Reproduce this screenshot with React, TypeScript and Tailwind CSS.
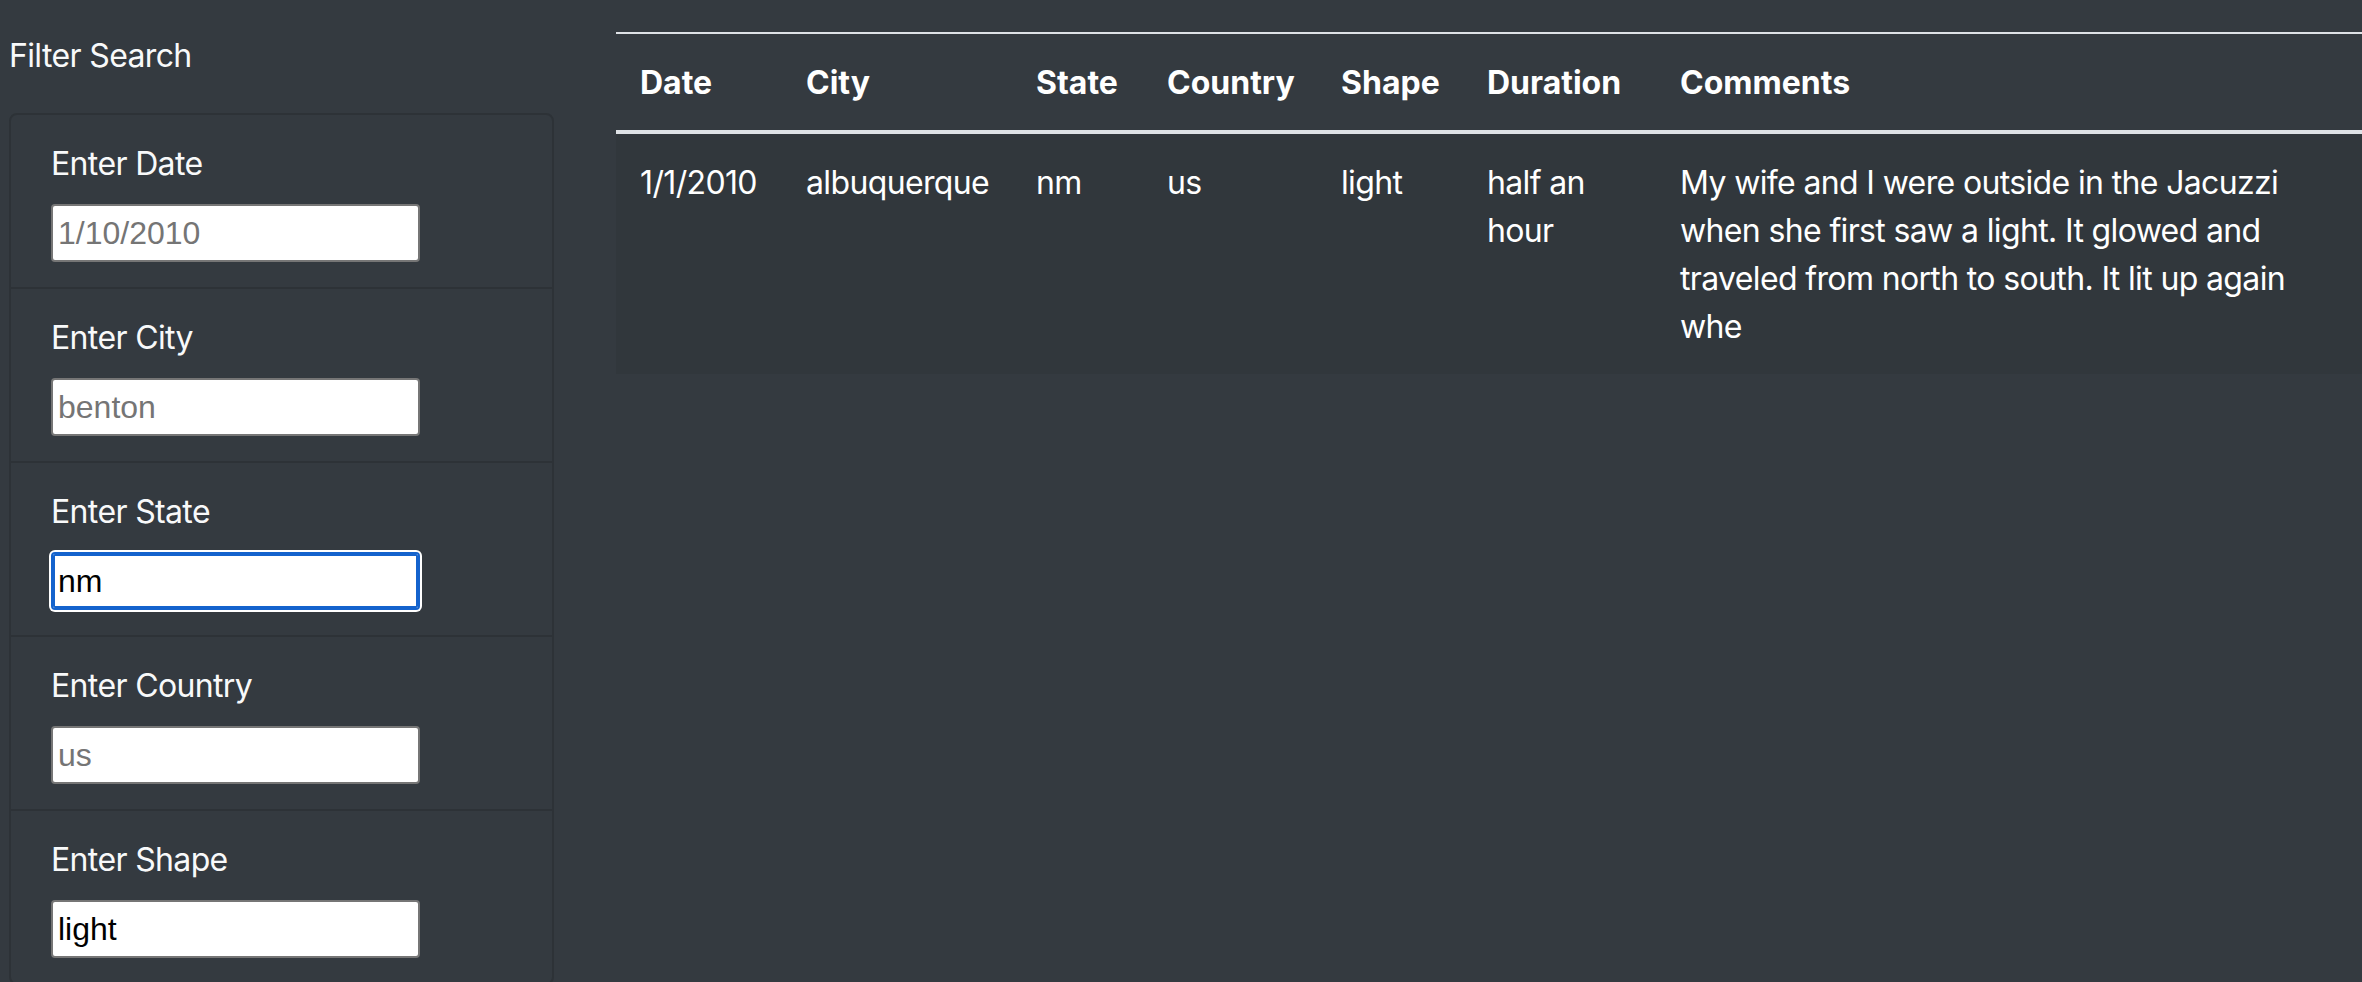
import React from 'react';

type Filter = {
  label: string;
  placeholder?: string;
  value?: string;
  focused?: boolean;
};

const filters: Filter[] = [
  { label: 'Enter Date', placeholder: '1/10/2010' },
  { label: 'Enter City', placeholder: 'benton' },
  { label: 'Enter State', value: 'nm', focused: true },
  { label: 'Enter Country', placeholder: 'us' },
  { label: 'Enter Shape', value: 'light' },
];

const columns = [
  { name: 'Date', width: 'w-[166px]' },
  { name: 'City', width: 'w-[230px]' },
  { name: 'State', width: 'w-[131px]' },
  { name: 'Country', width: 'w-[174px]' },
  { name: 'Shape', width: 'w-[146px]' },
  { name: 'Duration', width: 'w-[193px]' },
  { name: 'Comments', width: '' },
];

const rows = [
  [
    '1/1/2010',
    'albuquerque',
    'nm',
    'us',
    'light',
    'half an hour',
    'My wife and I were outside in the Jacuzzi when she first saw a light. It glowed and traveled from north to south. It lit up again whe',
  ],
];

export default function App() {
  return (
    <div className="h-screen w-full overflow-hidden bg-[#343a40] text-[32px] leading-[48px] text-[#f8f9fa] font-[Inter,sans-serif]">
      <div className="flex pt-[32px]">
        {/* Sidebar */}
        <aside className="ml-[9px] w-[545px] shrink-0">
          <div className="mb-[33px] tracking-[-0.02em]">Filter Search</div>
          <ul className="rounded-[8px] border-2 border-[#2d3237]">
            {filters.map((f, i) => (
              <li
                key={f.label}
                className={`flex flex-col items-start px-[40px] py-[25px] ${i < filters.length - 1 ? 'border-b-2 border-[#2d3237]' : ''}`}
              >
                <label className="mb-[16px] tracking-[-0.02em]">{f.label}</label>
                <input
                  type="text"
                  readOnly
                  placeholder={f.placeholder}
                  defaultValue={f.value}
                  className={`h-[58px] w-[369px] rounded-[4px] border-2 bg-white px-[5px] text-[32px] leading-normal text-black placeholder:text-[#757575] outline-none font-['Liberation_Sans',Arial,sans-serif] ${
                    f.focused
                      ? 'border-[#1463cd] shadow-[0_0_0_2px_#ffffff,inset_0_0_0_2px_#1463cd]'
                      : 'border-[#767676]'
                  }`}
                />
              </li>
            ))}
          </ul>
        </aside>

        {/* Results table */}
        <main className="ml-[62px] flex-1">
          <table className="w-full table-fixed border-collapse">
            <thead>
              <tr>
                {columns.map((c) => (
                  <th
                    key={c.name}
                    className={`${c.width} border-t-2 border-b-4 border-[#dee2e6] px-[24px] pt-[25px] pb-[23px] text-left align-bottom font-bold text-white`}
                  >
                    {c.name}
                  </th>
                ))}
              </tr>
            </thead>
            <tbody>
              {rows.map((r, i) => (
                <tr key={i} className="bg-black/5">
                  {r.map((cell, j) => (
                    <td key={j} className="px-[24px] pt-[25px] pb-[23px] align-top tracking-[-0.02em] text-white">
                      {cell}
                    </td>
                  ))}
                </tr>
              ))}
            </tbody>
          </table>
        </main>
      </div>
    </div>
  );
}
